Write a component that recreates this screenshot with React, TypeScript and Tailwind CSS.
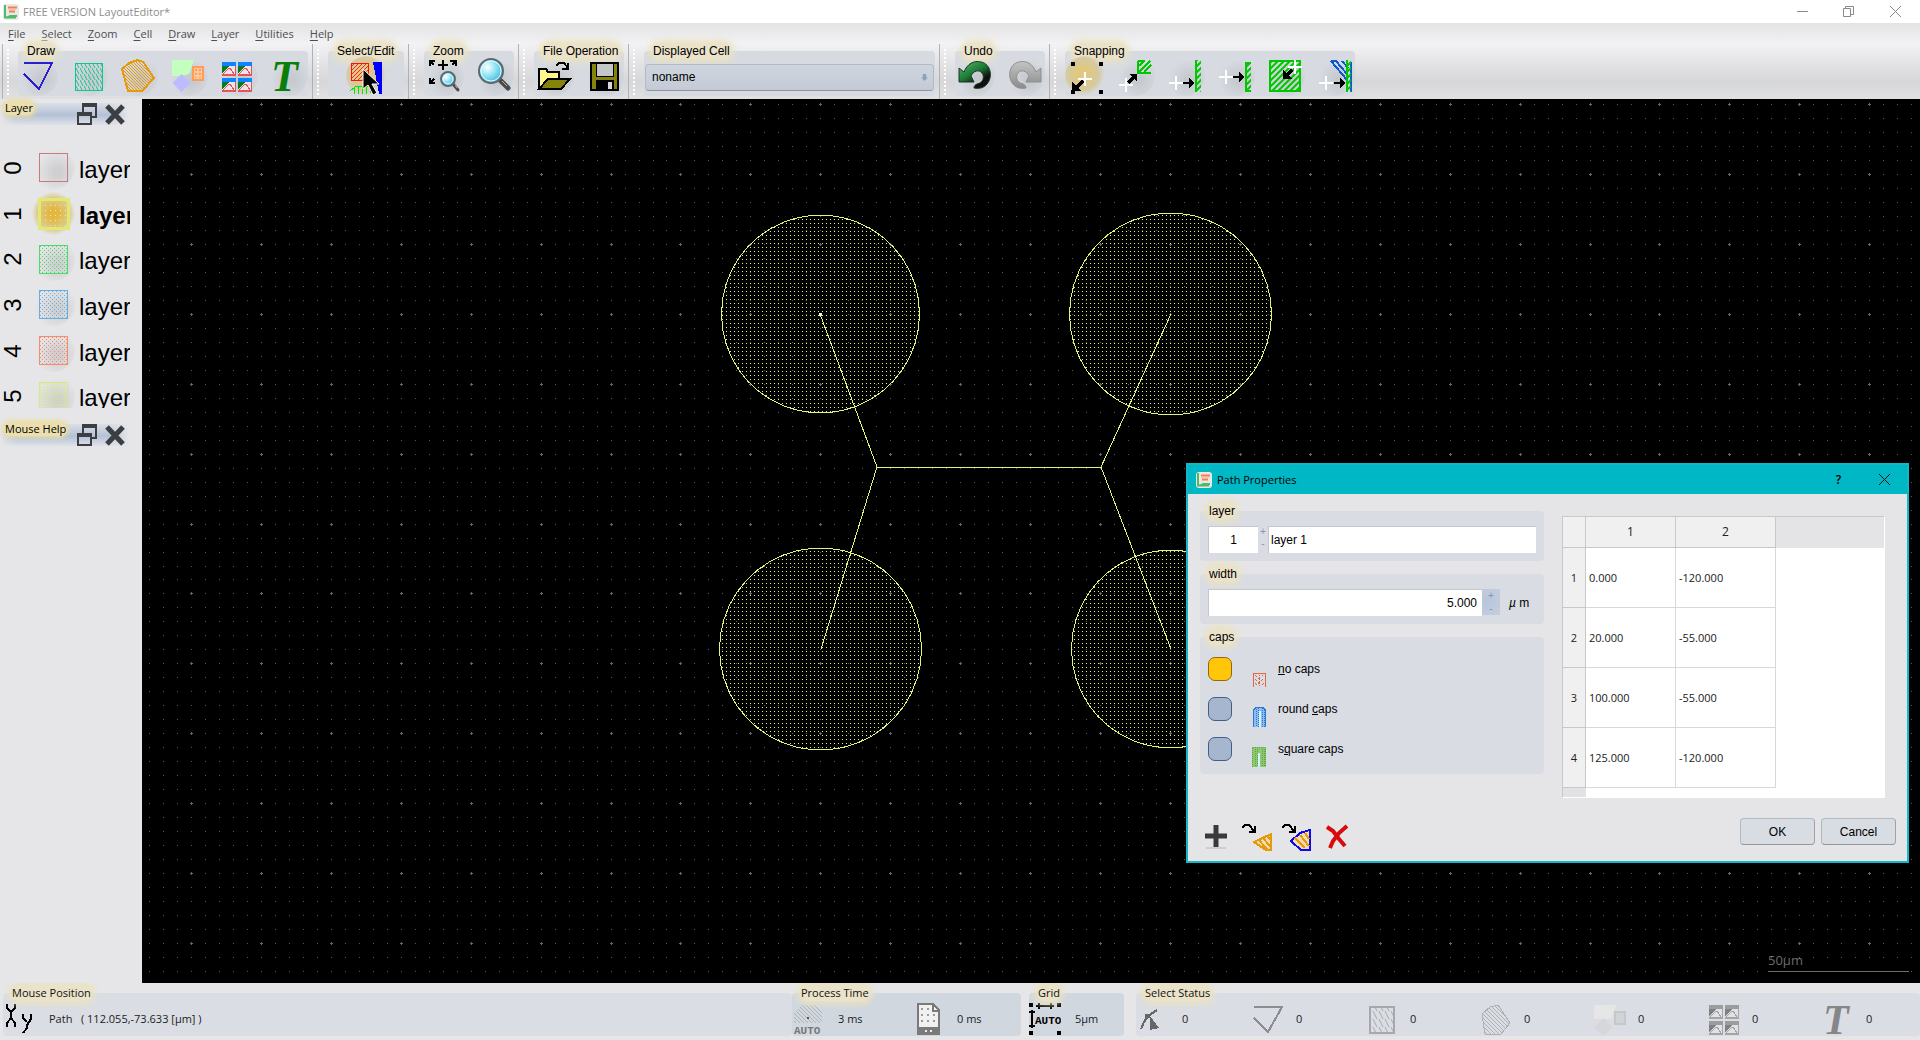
import React from 'react';

// ---------- shared bits ----------

function GroupTitle({ children, segoe }: { children: React.ReactNode; segoe?: boolean }) {
  return (
    <div
      className={`absolute left-2 -top-2 h-4 px-[1px] rounded-full bg-[#eae3ca] shadow-[0_0_6px_3px_#ebe2c0] leading-4 whitespace-nowrap ${
        segoe
          ? "font-['Open_Sans',sans-serif] text-[11px] text-[#111]"
          : "font-['Liberation_Sans',sans-serif] text-[12px] text-black"
      }`}
    >
      {children}
    </div>
  );
}

function ToolGroup({ title, className = '', children }: { title: string; className?: string; children: React.ReactNode }) {
  return (
    <div className="flex border-l border-[#b0b1b4] h-[55px]">
      <div className="w-1 ml-[3px] mr-2 my-1 bg-[radial-gradient(circle,#ffffff_1px,transparent_1px)] bg-[length:4px_4px]" />
      <div className={`relative mt-[7px] h-[45px] mr-1 rounded bg-[#d7dbe1] ${className}`}>
        <GroupTitle>{title}</GroupTitle>
        {children}
      </div>
    </div>
  );
}

function ToolButton({ label, glow, children }: { label: string; glow?: boolean; children: React.ReactNode }) {
  return (
    <button
      aria-label={label}
      className={`relative size-10 rounded-full ${
        glow
          ? 'bg-[radial-gradient(circle_at_45%_45%,#e2c87c_15%,#d5c9a0_50%,transparent_70%)]'
          : 'bg-[radial-gradient(circle_at_60%_60%,#c6c9ce_10%,transparent_60%)]'
      }`}
    >
      <svg className="size-10 overflow-visible" viewBox="0 0 40 40" shapeRendering="crispEdges" fill="none">
        {children}
      </svg>
    </button>
  );
}

function AppLogo({ className = '' }: { className?: string }) {
  return (
    <svg className={`size-4 ${className}`} viewBox="0 0 16 16" fill="none">
      <rect width="16" height="16" rx="3" fill="#e9e9e4" />
      <path d="M2 1v12.500h11" stroke="#4dbb6a" strokeWidth="2" />
      <path d="M3 13l4-2h7v2z" fill="#4dbb6a" />
      <path d="M5 3.500h9M6 7.500h6" stroke="#ef7f55" strokeWidth="2" />
      <path d="M5 5.500h8" stroke="#f6c4ae" strokeWidth="1" />
    </svg>
  );
}

// ---------- icon drawings (40x40 unless noted) ----------

const layerDots = [
  { id: 1, color: '#f6e9a0', size: 5 },
  { id: 2, color: '#4bdc6c', size: 4 },
  { id: 3, color: '#6aaedb', size: 4 },
  { id: 4, color: '#f58c6e', size: 4 },
  { id: 5, color: '#d2ea86', size: 3 },
];

function Patterns() {
  return (
    <svg className="absolute size-0" aria-hidden="true">
      <defs>
        <pattern id="hatchTeal" width="4" height="6" patternUnits="userSpaceOnUse">
          <path d="M0 0l1 2 1 2 1 2" stroke="#14c48c" strokeWidth="1" fill="none" />
        </pattern>
        <pattern id="hatchOrange" width="3" height="3" patternUnits="userSpaceOnUse">
          <path d="M0 0l3 3" stroke="#e69a0a" strokeWidth="1" />
        </pattern>
        <pattern id="hatchRed" width="4" height="4" patternUnits="userSpaceOnUse">
          <path d="M0 4l4-4" stroke="#ff2020" strokeWidth="1" />
        </pattern>
        <pattern id="hatchGreen" width="6" height="6" patternUnits="userSpaceOnUse">
          <path d="M-1 7l8-8M-4 4l8-8M2 10l8-8" stroke="#00c800" strokeWidth="2" />
        </pattern>
        <pattern id="hatchGrey" width="6" height="8" patternUnits="userSpaceOnUse">
          <path d="M1 0l2 4 2 4" stroke="#a8a8aa" strokeWidth="1" fill="none" />
        </pattern>
        <pattern id="hatchGrey2" width="4" height="4" patternUnits="userSpaceOnUse">
          <path d="M0 0l4 4" stroke="#b0b1b4" strokeWidth="1" />
        </pattern>
        <pattern id="fillDots" width="4" height="4" patternUnits="userSpaceOnUse">
          <rect width="1" height="1" fill="#e3f37c" />
        </pattern>
        {layerDots.map((d) => (
          <pattern key={d.id} id={`layerFill${d.id}`} width={d.size} height={d.size} patternUnits="userSpaceOnUse">
            <rect x="1" y="1" width="1" height="1" fill={d.color} />
            {d.id > 1 && <rect x={d.size - 1} y={d.size - 1} width="1" height="1" fill={d.color} />}
          </pattern>
        ))}
        <radialGradient id="lens" cx="0.35" cy="0.35" r="0.7">
          <stop offset="0" stopColor="#ffffff" />
          <stop offset="0.5" stopColor="#8fe4f4" />
          <stop offset="1" stopColor="#3fb2d6" />
        </radialGradient>
        <linearGradient id="undoFill" x1="0" y1="0" x2="0.7" y2="1">
          <stop offset="0" stopColor="#5ab86c" />
          <stop offset="0.5" stopColor="#1d7a35" />
          <stop offset="0.8" stopColor="#101010" />
        </linearGradient>
        <linearGradient id="redoFill" x1="0" y1="0" x2="0" y2="1">
          <stop offset="0" stopColor="#c4c4c4" />
          <stop offset="1" stopColor="#8a8a8a" />
        </linearGradient>
      </defs>
    </svg>
  );
}

function ArrayTile({ x, y, grey }: { x: number; y: number; grey?: boolean }) {
  const bar = grey ? '#9c9c9e' : '#0a84ff';
  const line = grey ? '#a4a4a6' : '#e2565a';
  const corner = grey ? '#808082' : '#0a7a1e';
  const paper = grey ? '#dfe1e5' : '#ece4e8';
  return (
    <g transform={`translate(${x} ${y})`}>
      <rect width="14" height="14" fill={paper} />
      <path d="M0 4h7l-7 7z" fill={corner} />
      <path d="M1 12l6-6h1l4 6" stroke={line} strokeWidth="1" />
      <path d="M13 4h1v10H0v-2h13z" fill={line} />
      <rect width="14" height="4" fill={bar} />
    </g>
  );
}

function Plus({ x, y }: { x: number; y: number }) {
  return <path d={`M${x - 7} ${y}h14M${x} ${y - 7}v14`} stroke="#fff" strokeWidth="2" />;
}

function ArrowRight({ x, y }: { x: number; y: number }) {
  return (
    <g>
      <path d={`M${x - 12} ${y}h8`} stroke="#000" strokeWidth="2" />
      <path d={`M${x - 6} ${y - 5}l6 5-6 5z`} fill="#000" />
    </g>
  );
}

function Magnifier({ x, y, r, tx, ty }: { x: number; y: number; r: number; tx: number; ty: number }) {
  const hx = x + r * 0.75;
  const hy = y + r * 0.75;
  return (
    <g shapeRendering="auto">
      <path d={`M${hx} ${hy}L${tx} ${ty}`} stroke="#4a4a4a" strokeWidth={r > 9 ? 5 : 3} strokeLinecap="round" />
      <path d={`M${hx + 2} ${hy + 1}L${tx - 1} ${ty - 2}`} stroke="#b9b2a0" strokeWidth="1" />
      <circle cx={x} cy={y} r={r} fill="url(#lens)" stroke="#5b6a70" strokeWidth="2" />
      <circle cx={x} cy={y} r={r - 2} stroke="#e6fbff" strokeWidth="1" />
    </g>
  );
}

function CurvedArrow({ flip }: { flip?: boolean }) {
  return (
    <g shapeRendering="auto" transform={flip ? 'translate(40 0) scale(-1 1)' : undefined}>
      <path
        d="M4 12l5 4C12 8 19 4 26 6c10 2 12 15 6 22-3 4-8 5-13 4 0-2 1-3 3-4 6-1 8-7 5-11-3-4-9-2-11 3l3 6H4z"
        fill={flip ? 'url(#redoFill)' : 'url(#undoFill)'}
        stroke={flip ? '#8f8f8f' : '#16361e'}
        strokeWidth="1"
      />
    </g>
  );
}

// ---------- top area ----------

function TitleBar() {
  return (
    <header className="flex items-center h-[23px] bg-white pl-[3px] font-['Open_Sans',sans-serif]">
      <AppLogo />
      <h1 className="flex-1 ml-1 text-[11px] leading-4 text-[#8e8e8e]">FREE VERSION LayoutEditor*</h1>
      <div className="flex text-[#8a8a8a]">
        <button aria-label="Minimize" className="w-[45px] flex justify-center">
          <svg className="w-[11px] h-[11px]" viewBox="0 0 11 11"><path d="M0 5.500h11" stroke="currentColor" /></svg>
        </button>
        <button aria-label="Restore" className="w-[46px] flex justify-center">
          <svg className="w-[11px] h-[11px]" viewBox="0 0 11 11" fill="none" stroke="currentColor">
            <path d="M.5 2.500h7v8h-7zM2.500 2v-1.500h8v8H8" />
          </svg>
        </button>
        <button aria-label="Close" className="w-[49px] flex justify-center">
          <svg className="w-[11px] h-[11px]" viewBox="0 0 11 11" stroke="currentColor"><path d="M0 0l11 11M11 0L0 11" /></svg>
        </button>
      </div>
    </header>
  );
}

const menus = ['File', 'Select', 'Zoom', 'Cell', 'Draw', 'Layer', 'Utilities', 'Help'];

function MenuBar() {
  return (
    <nav className="flex gap-4 h-[21px] pl-2 items-center font-['Open_Sans',sans-serif] text-[11px] leading-4 text-[#4c4d51]">
      {menus.map((m) => (
        <button key={m}>
          <span className="underline underline-offset-2">{m[0]}</span>
          {m.slice(1)}
        </button>
      ))}
    </nav>
  );
}

function ToolBar() {
  return (
    <div className="flex h-[55px] pl-[2px]">
      <ToolGroup title="Draw" className="flex gap-[10px] pt-[5px]">
        <ToolButton label="Path">
          <path d="M6 7h28L21 33 6 18" stroke="#2a1fd0" strokeWidth="2" />
        </ToolButton>
        <ToolButton label="Box">
          <rect x="7" y="7" width="27" height="27" fill="url(#hatchTeal)" stroke="#14c48c" strokeWidth="1" />
        </ToolButton>
        <ToolButton label="Polygon">
          <path d="M11 7l9-3 5 2 11 16-12 13H10L4 13z" fill="url(#hatchOrange)" stroke="#e69a0a" strokeWidth="2" />
        </ToolButton>
        <ToolButton label="Cell reference">
          <path d="M4 4h22l-5 14-8 2H4z" fill="#c3ffbe" />
          <path d="M13 18l9 9-9 9-9-9z" fill="#bcbcff" />
          <rect x="25" y="11" width="10" height="13" fill="#ffc9a0" stroke="#ff9d55" strokeWidth="2" />
          <path d="M28 13v9M32 13v9" stroke="#ff9d55" strokeWidth="2" strokeDasharray="2 2" />
        </ToolButton>
        <ToolButton label="Cell array">
          <ArrayTile x={4} y={6} />
          <ArrayTile x={20} y={6} />
          <ArrayTile x={4} y={22} />
          <ArrayTile x={20} y={22} />
        </ToolButton>
        <ToolButton label="Text">
          <text x="3" y="35" fontSize="44" fill="#0a7d0a" fontFamily="Liberation Serif, serif" fontStyle="italic" fontWeight="bold">T</text>
        </ToolButton>
      </ToolGroup>

      <ToolGroup title="Select/Edit" className="w-[76px] flex justify-center pt-[5px]">
        <ToolButton label="Select and edit" glow>
          <rect x="5" y="7" width="17" height="17" fill="url(#hatchRed)" stroke="#ff1010" strokeWidth="1" />
          <path d="M27 6h9v32h-3z" fill="#0000ff" />
          <path d="M4 35l5-4 7-1 7 1 4 4M8 32v6M12 31v7M16 30v8M20 31v7M24 32v5" stroke="#00e600" strokeWidth="1" />
          <path d="M17 13v20l5-4 5 10 4-2-5-9h7z" fill="#000" stroke="#fff" strokeWidth="1" shapeRendering="auto" />
        </ToolButton>
      </ToolGroup>

      <ToolGroup title="Zoom" className="flex gap-[10px] pt-[5px]">
        <ToolButton label="Zoom fit">
          <path d="M6 10V5h5M26 5h6v5M6 22v5h5M6 5l4 4M32 5l-4 4M6 27l4-4M14 9h10M19 4v10" stroke="#000" strokeWidth="2" />
          <Magnifier x={24} y={23} r={7} tx={34} ty={34} />
        </ToolButton>
        <ToolButton label="Zoom">
          <Magnifier x={17} y={15} r={12} tx={34} ty={32} />
        </ToolButton>
      </ToolGroup>

      <ToolGroup title="File Operation" className="flex gap-[10px] pt-[5px]">
        <ToolButton label="Open">
          <path d="M5 33V13h7l2 3h11v7" fill="#fff68c" stroke="#000" strokeWidth="2" />
          <path d="M5 33l9-10h22l-9 10z" fill="#84840a" stroke="#000" strokeWidth="2" />
          <path d="M22 10l3-3h5l4 5M34 7v6h-6" stroke="#000" strokeWidth="2" />
        </ToolButton>
        <ToolButton label="Save">
          <rect x="7" y="7" width="27" height="27" fill="#84840a" stroke="#000" strokeWidth="2" />
          <rect x="12" y="7" width="17" height="13" fill="#c4c6c8" stroke="#000" strokeWidth="1" />
          <rect x="12" y="24" width="18" height="10" fill="#000" />
          <rect x="24" y="26" width="4" height="7" fill="#d8d8d8" />
        </ToolButton>
      </ToolGroup>

      <ToolGroup title="Displayed Cell" className="w-[291px] px-[1px] pt-3">
        <div className="relative">
          <select
            aria-label="Displayed Cell"
            className="w-full h-[27px] appearance-none rounded border border-[#b3bac3] border-b-[#8f969f] bg-gradient-to-b from-[#cfd5de] to-[#c4cbd6] pl-[6px] font-['Liberation_Sans',sans-serif] text-[12px] leading-4 text-black"
          >
            <option>noname</option>
          </select>
          <svg className="absolute right-[6px] top-[11px] w-[7px] h-[7px]" viewBox="0 0 8 8" fill="#8aa3c0"><path d="M2 0h4v4h2L4 8 0 4h2z" /></svg>
        </div>
      </ToolGroup>

      <ToolGroup title="Undo" className="flex gap-[10px] pt-[5px]">
        <ToolButton label="Undo"><CurvedArrow /></ToolButton>
        <ToolButton label="Redo"><CurvedArrow flip /></ToolButton>
      </ToolGroup>

      <ToolGroup title="Snapping" className="flex gap-[10px] pt-[5px]">
        <ToolButton label="Snap to grid" glow>
          <path d="M6 6h4v4H6zM34 6h4v4h-4zM6 34h4v4H6zM34 34h4v4h-4z" fill="#000" />
          <Plus x={20} y={23} />
          <path d="M18 25l-7 7" stroke="#000" strokeWidth="3" />
          <path d="M7 26v9h9z" fill="#000" />
        </ToolButton>
        <ToolButton label="Snap to corner">
          <path d="M23 5v12h13M23 5h7" stroke="#00c800" strokeWidth="2" />
          <path d="M24 16L35 5M24 10l5-5M29 16l7-7" stroke="#00c800" strokeWidth="2" />
          <Plus x={11} y={29} />
          <path d="M13 27l6-6" stroke="#000" strokeWidth="3" />
          <path d="M14 18h8v8z" fill="#000" />
        </ToolButton>
        <ToolButton label="Snap to edge">
          <path d="M31 4v32" stroke="#00c800" strokeWidth="2" />
          <rect x="31" y="4" width="5" height="32" fill="url(#hatchGreen)" />
          <Plus x={11} y={27} />
          <ArrowRight x={30} y={27} />
        </ToolButton>
        <ToolButton label="Snap to middle">
          <path d="M36 7h-5v28h5" stroke="#00c800" strokeWidth="2" />
          <rect x="31" y="6" width="5" height="30" fill="url(#hatchGreen)" />
          <Plus x={11} y={21} />
          <ArrowRight x={30} y={21} />
        </ToolButton>
        <ToolButton label="Snap to center">
          <rect x="5" y="5" width="30" height="30" fill="url(#hatchGreen)" stroke="#00c800" strokeWidth="2" />
          <Plus x={30} y={11} />
          <path d="M27 14l-6 6" stroke="#000" strokeWidth="3" />
          <path d="M18 14v9h10z" fill="#000" />
        </ToolButton>
        <ToolButton label="Snap to crossing">
          <path d="M16 5l16 19M16 5h5l11 13M27 5l6 7M36 6v30" stroke="#0a5ad6" strokeWidth="2" />
          <path d="M32 4v32" stroke="#00c800" strokeWidth="2" />
          <rect x="32" y="4" width="4" height="32" fill="url(#hatchGreen)" />
          <Plus x={11} y={27} />
          <ArrowRight x={31} y={27} />
        </ToolButton>
      </ToolGroup>
    </div>
  );
}

// ---------- side docks ----------

function DockHeader({ title }: { title: string }) {
  return (
    <div className="relative flex items-center justify-end gap-2 h-[22px] w-[129px] pr-1 bg-[linear-gradient(to_right,#e6e6e8,transparent_12%,transparent_85%,#e6e6e8),linear-gradient(to_bottom,#dcdfe6,#b4c1d6_55%,#dfe2e9)]">
      <h2 className="absolute left-1 -top-[2px] px-[1px] rounded-full bg-[#ebdfae] shadow-[0_0_4px_2px_#eadda6] font-['Open_Sans',sans-serif] text-[11px] leading-[14px] text-black">
        {title}
      </h2>
      <button aria-label={`Float ${title}`}>
        <svg className="w-5 h-[22px]" viewBox="0 0 20 22" fill="none" stroke="#3b3e42" strokeWidth="2">
          <path d="M6 9V1h13v13h-5M6 3h13" />
          <path d="M1 10h13v11H1zM1 12h13" />
        </svg>
      </button>
      <button aria-label={`Close ${title}`}>
        <svg className="w-5 h-[22px]" viewBox="0 0 20 22" stroke="#3b3e42" strokeWidth="5"><path d="M2 3l16 17M18 3L2 20" /></svg>
      </button>
    </div>
  );
}

const layers = [
  { id: 0, color: '#c47c7c' },
  { id: 1, color: '#dfea72', active: true },
  { id: 2, color: '#4bdc6c' },
  { id: 3, color: '#6aaedb' },
  { id: 4, color: '#f58c6e' },
  { id: 5, color: '#d2ea86' },
];

function SidePanel() {
  return (
    <aside className="w-[142px] shrink-0 pt-1 bg-[#e6e6e8]">
      <DockHeader title="Layer" />
      <div className="mt-5 h-[263px] w-[130px] overflow-hidden">
        <ul className="flex flex-col h-[274px] font-['Liberation_Sans',sans-serif] text-[24px] leading-7 text-black">
          {layers.map((l) => (
            <li key={l.id} className="flex flex-1 items-center">
              <span className="w-[26px] shrink-0 text-center -rotate-90">{l.id}</span>
              <span
                className={`shrink-0 ml-[6px] p-[7px] rounded-full ${
                  l.active
                    ? 'bg-[radial-gradient(circle,#e3b840_15%,#dcc98a_52%,transparent_72%)]'
                    : 'bg-[radial-gradient(circle_at_60%_60%,#cfcfd1_10%,transparent_60%)]'
                }`}
              >
                <svg className="block size-[29px] overflow-visible" viewBox="0 0 29 29" shapeRendering="crispEdges">
                  <rect
                    x={l.active ? 0 : 0.5}
                    y={l.active ? 0 : 0.5}
                    width={l.active ? 29 : 28}
                    height={l.active ? 29 : 28}
                    fill={l.id ? `url(#layerFill${l.id})` : 'none'}
                    stroke={l.color}
                    strokeWidth={l.active ? 3 : 1}
                  />
                </svg>
              </span>
              <span className={`ml-1 pt-1 whitespace-nowrap ${l.active ? 'font-bold' : ''}`}>layer</span>
            </li>
          ))}
        </ul>
      </div>
      <div className="mt-4">
        <DockHeader title="Mouse Help" />
      </div>
    </aside>
  );
}

// ---------- drawing canvas ----------

// grid pitch in screen pixels; every fifth point is a cross
const PITCH = 13.985;
let dots = '';
let crosses = '';
for (let i = -3; i < 180; i++) {
  for (let j = 0; j < 80; j++) {
    const x = Math.round(49 + i * PITCH);
    const y = Math.round(5 + j * PITCH);
    if (i % 5 === 0 && j % 5 === 0) {
      crosses += `M${x - 1} ${y}h3v1h-3zM${x} ${y - 1}h1v3h-1z`;
    } else {
      dots += `M${x} ${y}h1v1h-1z`;
    }
  }
}

const discs = [
  { x: 678, y: 215, r: 99 },
  { x: 1028, y: 215, r: 101 },
  { x: 678, y: 550, r: 101 },
  { x: 1028, y: 550, r: 99 },
];

function discPoints(x: number, y: number, r: number) {
  const pts: string[] = [];
  for (let k = 0; k < 42; k++) {
    const a = ((k + 0.5) / 42) * Math.PI * 2 + Math.PI / 2;
    pts.push(`${(x + 0.5 + r * Math.cos(a)).toFixed(1)},${(y + r * Math.sin(a)).toFixed(1)}`);
  }
  return pts.join(' ');
}

function Canvas() {
  return (
    <svg className="absolute inset-0 w-full h-full" shapeRendering="crispEdges" fill="none">
      <path d={dots} fill="#5a5a5a" />
      <path d={crosses} fill="#666666" />
      {discs.map((d) => (
        <polygon key={`${d.x}-${d.y}`} points={discPoints(d.x, d.y, d.r)} fill="url(#fillDots)" stroke="#e3f37c" />
      ))}
      <path d="M678 215l57 153h224l70-153M735 368l-56 182M959 368l70 182" stroke="#e3f37c" />
      <rect x="677" y="214" width="3" height="3" fill="#f4f4d8" />
    </svg>
  );
}

// ---------- path properties dialog ----------

function Panel({ title, className = '', children }: { title: string; className?: string; children: React.ReactNode }) {
  return (
    <div role="group" aria-label={title} className={`relative w-[344px] rounded bg-[#d9dce3] ${className}`}>
      <GroupTitle>{title}</GroupTitle>
      {children}
    </div>
  );
}

const caps = [
  { id: 'none', label: <><u>n</u>o caps</>, checked: true },
  { id: 'round', label: <>round <u>c</u>aps</> },
  { id: 'square', label: <>s<u>q</u>uare caps</> },
];

function CapIcon({ kind }: { kind: string }) {
  return (
    <svg className="w-4 h-6" viewBox="0 0 16 24" shapeRendering="crispEdges" fill="none">
      {kind === 'none' && (
        <g stroke="#e0683c">
          <path d="M1.500 24V10.500h12V24" />
          <path d="M3 12l4 4 4-4M3 16l4 4 4-4M3 20l3 3M11 16l-5 5M12 20l-3 3M7 12v12" strokeDasharray="1 1" />
        </g>
      )}
      {kind === 'round' && (
        <g>
          <path d="M1 24V7l3-3h7l3 3v17z" fill="#8fbdf0" />
          <path d="M1.500 24V7l3-3h6l3 3v17" stroke="#2a78d2" />
          <path d="M4 6v18M6 5v19M10 5v19M12 7v17" stroke="#2a78d2" strokeDasharray="1 1" />
          <path d="M7 8h2v16H7z" fill="#d5f2ff" />
        </g>
      )}
      {kind === 'square' && (
        <g>
          <path d="M0 4h14v20H0z" fill="#8fc673" />
          <path d="M.5 24V4.500h13V24M3 6v18M5 6v18M10 6v18M12 6v18" stroke="#5fa83a" strokeDasharray="1 1" />
          <path d="M6 10h2v14H6z" fill="#d5f2ff" />
        </g>
      )}
    </svg>
  );
}

const points = [
  ['0.000', '-120.000'],
  ['20.000', '-55.000'],
  ['100.000', '-55.000'],
  ['125.000', '-120.000'],
];

function PointTable() {
  const head = 'border-r border-b border-[#c8c8c8] bg-[#f0f0f0] font-normal text-center';
  const cell = 'border-r border-b border-[#d8d8d8] pl-[3px] text-left';
  return (
    <div className="w-[323px] h-[282px] border border-[#c8c8c8] border-r-white border-b-white bg-white bg-[linear-gradient(#e4e4e6,#e4e4e6)] bg-[length:100%_31px] bg-no-repeat">
      <table className="h-[271px] w-[213px] table-fixed border-separate border-spacing-0 font-['Open_Sans',sans-serif] text-[11px] leading-4 text-[#202020]">
        <thead>
          <tr className="h-[31px]">
            <th className={`w-[23px] ${head}`} aria-label="Point" />
            <th className={`w-[90px] text-[12px] ${head}`}>1</th>
            <th className={`w-[100px] text-[12px] ${head}`}>2</th>
          </tr>
        </thead>
        <tbody>
          {points.map((p, i) => (
            <tr key={i} className="h-[60px]">
              <th className={head}>{i + 1}</th>
              <td className={cell}>{p[0]}</td>
              <td className={cell}>{p[1]}</td>
            </tr>
          ))}
        </tbody>
      </table>
      <div className="w-[23px] h-[9px] bg-[#e2e2e4]" />
    </div>
  );
}

function PathDialog() {
  const field = 'h-[27px] border-t border-l border-[#c4c6ca] bg-white text-black';
  const button = 'w-[75px] h-[27px] rounded border border-[#b4b8bf] border-b-[#92969c] border-r-[#9da1a8] bg-[#d8dce3] text-center';
  return (
    <div
      role="dialog"
      aria-label="Path Properties"
      className="absolute right-[11px] bottom-[120px] w-[723px] border-2 border-[#12b8c6] bg-[#e5e5e7] font-['Liberation_Sans',sans-serif] text-[12px] leading-4 text-black"
    >
      <div className="flex items-center h-[29px] pl-2 bg-[#00b7c5] font-['Open_Sans',sans-serif]">
        <AppLogo />
        <h2 className="flex-1 ml-[5px] text-[11px]">Path Properties</h2>
        <button aria-label="Help" className="w-[45px] text-center text-[12px] font-semibold">?</button>
        <button aria-label="Close dialog" className="w-[46px] flex justify-center">
          <svg className="w-[11px] h-[11px]" viewBox="0 0 11 11" stroke="#101010"><path d="M0 0l11 11M11 0L0 11" /></svg>
        </button>
      </div>
      <div className="flex justify-between pl-3 pr-[22px] pt-[17px]">
        <div className="flex flex-col gap-[13px]">
          <Panel title="layer" className="flex h-[50px] pt-[15px] pl-2">
            <input aria-label="Layer number" defaultValue="1" className={`w-[50px] text-center ${field}`} />
            <div className="flex flex-col w-[10px] h-[27px] text-[10px] leading-[12px] text-[#7f96b8]">
              <button aria-label="Next layer">+</button>
              <button aria-label="Previous layer">-</button>
            </div>
            <input aria-label="Layer name" defaultValue="layer 1" className={`w-[268px] pl-[2px] ${field}`} />
          </Panel>
          <Panel title="width" className="flex h-[50px] pt-[15px] pl-2">
            <input aria-label="Width" defaultValue="5.000" className={`w-[274px] pr-[5px] text-right ${field}`} />
            <div className="flex flex-col w-[18px] h-[26px] text-[10px] leading-[13px] text-[#7f96b8] bg-[radial-gradient(circle_at_30%_50%,#b6c6de,#c6ced9)]">
              <button aria-label="Increase width">+</button>
              <button aria-label="Decrease width">-</button>
            </div>
            <span className="ml-[9px] mt-[6px]"><i>µ</i> m</span>
          </Panel>
          <Panel title="caps" className="flex flex-col h-[137px] gap-4 pt-5 pl-2">
            {caps.map((c) => (
              <label key={c.id} className="flex h-6 items-center">
                <input
                  type="radio"
                  name="caps"
                  defaultChecked={c.checked}
                  className="appearance-none size-6 rounded-[7px] border border-[#3f5f86] bg-[#a6b6ce] checked:border-[#94680a] checked:bg-[#ffc60a]"
                />
                <span className="ml-5 mr-[10px] pt-3"><CapIcon kind={c.id} /></span>
                <span>{c.label}</span>
              </label>
            ))}
          </Panel>
        </div>
        <div className="pt-[5px]">
          <PointTable />
        </div>
      </div>
      <div className="flex items-start justify-between h-[43px] mt-[20px] pl-3 pr-[11px]">
        <div className="flex gap-2 pt-[2px]">
          <button aria-label="Add point">
            <svg className="size-8" viewBox="0 0 32 32" fill="none">
              <path d="M6 28h20" stroke="#b8b8ba" strokeWidth="1" />
              <path d="M16 5v22M5 16h22" stroke="#3a3a3a" strokeWidth="5" />
            </svg>
          </button>
          <button aria-label="To polygon">
            <svg className="size-8" viewBox="0 0 32 32" fill="none" shapeRendering="crispEdges">
              <path d="M2 8l3-3h4l5 6M15 6v6H9" stroke="#000" strokeWidth="2" />
              <path d="M31 14v16h-5L14 22z" fill="#f0dcb0" stroke="#e69a0a" strokeWidth="2" />
              <path d="M18 19l9 10M22 17l9 10M27 16l4 4" stroke="#e69a0a" strokeWidth="2" />
            </svg>
          </button>
          <button aria-label="To closed polygon">
            <svg className="size-8" viewBox="0 0 32 32" fill="none" shapeRendering="crispEdges">
              <path d="M2 8l3-3h4l5 6M15 6v6H9" stroke="#000" strokeWidth="2" />
              <path d="M30 10v20h-9l-10-9 9-8z" fill="#f0dcb0" stroke="#0a0af0" strokeWidth="2" />
              <path d="M15 18l10 10M20 15l9 11M25 13l4 6" stroke="#e69a0a" strokeWidth="2" />
            </svg>
          </button>
          <button aria-label="Delete">
            <svg className="size-8" viewBox="0 0 32 32" fill="none" stroke="#d80a0a" strokeWidth="4">
              <path d="M7 7l6 4 6 8 6 7M27 6l-8 7-6 8-3 7" />
            </svg>
          </button>
        </div>
        <div className="flex gap-[6px]">
          <button className={button}>OK</button>
          <button className={button}>Cancel</button>
        </div>
      </div>
    </div>
  );
}

// ---------- status bar ----------

function StatusIcon({ children }: { children: React.ReactNode }) {
  return (
    <svg className="size-8 shrink-0" viewBox="0 0 32 32" shapeRendering="crispEdges" fill="none">
      {children}
    </svg>
  );
}

const selectIcons = [
  <>
    <path d="M3 26l3-7 4-6 9-6" stroke="#666" strokeWidth="2" />
    <rect x="7" y="11" width="5" height="4" fill="#666" />
    <path d="M12 13v14l9-2z" fill="#666" />
  </>,
  <path d="M2 4h28L16 29 2 15" stroke="#8d8d8f" strokeWidth="2" />,
  <rect x="4" y="4" width="24" height="26" fill="url(#hatchGrey)" stroke="#a8a8aa" strokeWidth="2" />,
  <path d="M2 11l8-7 8-2 12 18-9 11H5z" fill="url(#hatchGrey2)" stroke="#b0b1b4" strokeWidth="1" />,
  <>
    <path d="M0 2h22l-4 14H0z" fill="#e6e6e6" />
    <path d="M9 15l9 9-9 9-9-9z" fill="#d6d7da" />
    <path d="M21 9h10v12H21z" fill="#d2d3d6" stroke="#c6c7ca" strokeWidth="2" />
  </>,
  <>
    <ArrayTile x={1} y={2} grey />
    <ArrayTile x={17} y={2} grey />
    <ArrayTile x={1} y={18} grey />
    <ArrayTile x={17} y={18} grey />
  </>,
  <text x="1" y="31" fontSize="42" fill="#868688" fontFamily="Liberation Serif, serif" fontStyle="italic" fontWeight="bold">T</text>,
];

function StatusBar() {
  const panel = 'relative h-[43px] rounded flex items-center pt-2';
  return (
    <footer className="flex h-[57px] pt-[10px] pl-[3px] overflow-hidden bg-[#e6e6e8] font-['Open_Sans',sans-serif] text-[11px] leading-4 text-[#1c1c1c]">
      <section className={`${panel} flex-1 bg-[#dadde4]`}>
        <GroupTitle segoe>Mouse Position</GroupTitle>
        <svg className="w-7 h-8 ml-[3px]" viewBox="0 0 28 32" shapeRendering="crispEdges" fill="none" stroke="#000" strokeWidth="2">
          <path d="M1 1v4l4 4 4-4V1M5 9v7M5 15l-4 5v4M5 15l4 5v4" />
          <path d="M17 11v4l4 4M25 11v5l-4 6v3l-4 5" />
        </svg>
        <span className="ml-[15px] whitespace-pre">Path   ( 112.055,-73.633 [µm] )</span>
      </section>
      <section className={`${panel} w-[229px] bg-[#d0d7df]`}>
        <GroupTitle segoe>Process Time</GroupTitle>
        <StatusIcon>
          <path d="M2 20V10l8-8h12l8 8v10z" fill="url(#hatchGrey2)" />
          <rect x="15" y="14" width="2" height="2" fill="#555" />
          <text x="2" y="31" fontSize="11" fontWeight="bold" fill="#777" fontFamily="Liberation Mono, monospace">AUTO</text>
        </StatusIcon>
        <span className="w-[75px] ml-[14px]">3 ms</span>
        <StatusIcon>
          <path d="M5 1h15l6 6v24H5z" fill="#f1f1f1" stroke="#7a7a7a" strokeWidth="2" />
          <path d="M20 1v7h6" stroke="#7a7a7a" strokeWidth="2" />
          <path d="M8 6h10M8 12h14M8 18h14" stroke="#9a9a9a" strokeWidth="2" strokeDasharray="2 4" />
          <rect x="5" y="24" width="21" height="7" fill="#7a7a7a" />
          <path d="M12 28h8" stroke="#eee" strokeWidth="2" strokeDasharray="2 3" />
        </StatusIcon>
        <span className="ml-3">0 ms</span>
      </section>
      <section className={`${panel} w-[95px] ml-2 bg-[#d0d7df]`}>
        <GroupTitle segoe>Grid</GroupTitle>
        <StatusIcon>
          <path d="M0 0h4v4H0zM28 0h4v4h-4zM0 28h4v4H0zM28 28h4v4h-4z" fill="#000" />
          <path d="M7 3h18M10 0v6M22 0v6M3 7v18M0 9h6M0 23h6" stroke="#000" strokeWidth="2" />
          <text x="6" y="21" fontSize="11" fontWeight="bold" fill="#000" fontFamily="Liberation Mono, monospace">AUTO</text>
        </StatusIcon>
        <span className="ml-[14px]">5µm</span>
      </section>
      <section className={`${panel} w-[784px] ml-3 bg-[#dadde4]`}>
        <GroupTitle segoe>Select Status</GroupTitle>
        {selectIcons.map((icon, i) => (
          <div key={i} className="flex items-center w-[114px] shrink-0 pl-[2px]">
            <StatusIcon>{icon}</StatusIcon>
            <span className="ml-3">0</span>
          </div>
        ))}
      </section>
    </footer>
  );
}

export default function App() {
  return (
    <div className="flex flex-col h-screen overflow-hidden bg-[#e6e6e8]">
      <Patterns />
      <TitleBar />
      <div className="bg-[linear-gradient(to_bottom,#e3e3e4,#f2f2f4_27%,#e8e8ea_45%,#d7d7d9_77%,#e0e1e2)]">
        <MenuBar />
        <ToolBar />
      </div>
      <div className="flex flex-1 min-h-0">
        <SidePanel />
        <main className="relative flex-1 overflow-hidden bg-black">
          <Canvas />
          <div className="absolute right-[11px] bottom-[11px] w-[141px] border-b border-[#6c6c6c] font-['Open_Sans',sans-serif] text-[13px] leading-[22px] text-[#6c6c6c]">
            50µm
          </div>
          <PathDialog />
        </main>
      </div>
      <StatusBar />
    </div>
  );
}
